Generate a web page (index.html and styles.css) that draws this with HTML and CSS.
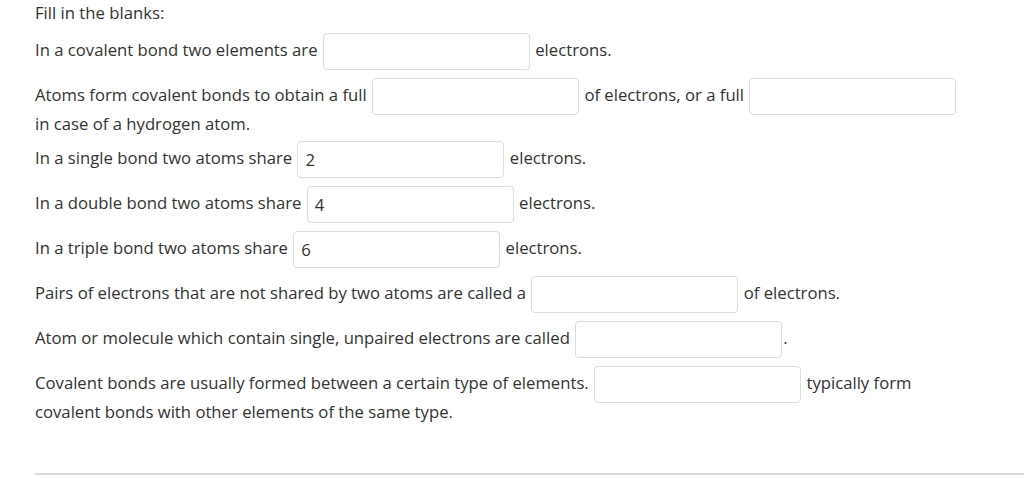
FILE: index.html
```html
<!DOCTYPE html>
<html lang="en">
<head>
<meta charset="utf-8">
<title>Fill in the blanks</title>
<link rel="stylesheet" href="styles.css">
</head>
<body>
<div class="quiz">
  <div class="intro">Fill in the blanks:</div>
  <div class="q">In a covalent bond two elements are <input class="blank" type="text" value=""> electrons.</div>
  <div class="q">Atoms form covalent bonds to obtain a full <input class="blank" type="text" value=""> of electrons, or a full <input class="blank" type="text" value=""> in case of a hydrogen atom.</div>
  <div class="q">In a single bond two atoms share <input class="blank" type="text" value="2"> electrons.</div>
  <div class="q">In a double bond two atoms share <input class="blank" type="text" value="4"> electrons.</div>
  <div class="q">In a triple bond two atoms share <input class="blank" type="text" value="6"> electrons.</div>
  <div class="q">Pairs of electrons that are not shared by two atoms are called a <input class="blank" type="text" value=""> of electrons.</div>
  <div class="q">Atom or molecule which contain single, unpaired electrons are called <input class="blank" type="text" value="">.</div>
  <div class="q">Covalent bonds are usually formed between a certain type of elements. <input class="blank" type="text" value=""> typically form covalent bonds with other elements of the same type.</div>
</div>
<div class="divider"></div>
</body>
</html>
```

FILE: styles.css
```css
html, body {
  margin: 0;
  padding: 0;
  background: #ffffff;
}

body {
  font-family: "Open Sans", "Noto Sans", sans-serif;
  font-size: 16.7px;
  color: #333333;
  padding-top: 4px;
}

.quiz {
  padding-left: 35px;
  width: 925px;
  line-height: 18.5px;
}

.intro {
  margin: 0 0 2px 0;
}

.q {
  margin: 0;
}

.blank {
  box-sizing: border-box;
  width: 207px;
  height: 37px;
  margin: 8px 1px 0 1px;
  padding: 0 7px;
  border: 1px solid #dcdcdc;
  border-radius: 4px;
  background: #ffffff;
  font-family: "Open Sans", "Noto Sans", sans-serif;
  font-size: 16.7px;
  color: #333333;
  vertical-align: -2px;
  outline: none;
}

.divider {
  margin-top: 51px;
  margin-left: 35px;
  height: 0;
  border-top: 2px solid #d9d9d9;
}
```
